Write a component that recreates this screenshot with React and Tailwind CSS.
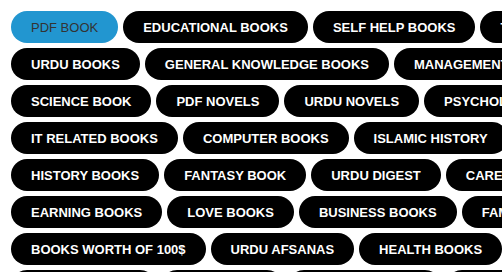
import React from 'react'

const rows = [
  ['PDF BOOK', 'EDUCATIONAL BOOKS', 'SELF HELP BOOKS', 'TECHNOLOGY BOOKS'],
  ['URDU BOOKS', 'GENERAL KNOWLEDGE BOOKS', 'MANAGEMENT BOOKS'],
  ['SCIENCE BOOK', 'PDF NOVELS', 'URDU NOVELS', 'PSYCHOLOGY BOOKS'],
  ['IT RELATED BOOKS', 'COMPUTER BOOKS', 'ISLAMIC HISTORY', 'POETRY BOOKS'],
  ['HISTORY BOOKS', 'FANTASY BOOK', 'URDU DIGEST', 'CAREER BOOKS'],
  ['EARNING BOOKS', 'LOVE BOOKS', 'BUSINESS BOOKS', 'FAMOUS NOVELS'],
  ['BOOKS WORTH OF 100$', 'URDU AFSANAS', 'HEALTH BOOKS', 'URDU POETRY'],
  ['ISLAMIC BOOKS', 'KIDS BOOKS', 'COOKING BOOKS', 'ENGLISH NOVELS'],
]

function Tag({ label, active }) {
  return (
    <a
      href="#"
      className={`flex h-8 shrink-0 items-center whitespace-nowrap rounded-full px-5 text-[13px] leading-none ${
        active ? 'bg-[#2296d0] font-normal text-[#333333]' : 'bg-black font-bold text-white'
      }`}
    >
      {label}
    </a>
  )
}

export default function App() {
  return (
    <div
      className="h-screen w-full overflow-hidden bg-white pl-[11px] pt-[11px]"
      style={{ fontFamily: '"Liberation Sans", Arial, sans-serif' }}
    >
      <div className="flex flex-col gap-[5px]">
        {rows.map((row, i) => (
          <div key={i} className="flex gap-[5px]">
            {row.map((label, j) => (
              <Tag key={label} label={label} active={i === 0 && j === 0} />
            ))}
          </div>
        ))}
      </div>
    </div>
  )
}
